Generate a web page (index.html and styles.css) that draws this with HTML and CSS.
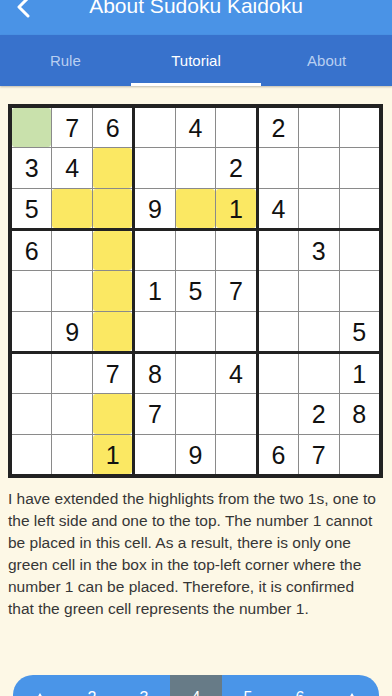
FILE: index.html
```html
<!DOCTYPE html>
<html lang="en">
<head>
<meta charset="utf-8">
<title>About Sudoku Kaidoku</title>
<link rel="stylesheet" href="styles.css">
</head>
<body>
<div class="app">
  <header class="appbar">
    <button class="back" aria-label="Back">
      <svg width="44" height="35" viewBox="0 0 44 35"><polyline points="28,-2 19,7 28,16" fill="none" stroke="#fff" stroke-width="3" stroke-linecap="round" stroke-linejoin="round"/></svg>
    </button>
    <h1 class="title">About Sudoku Kaidoku</h1>
    <span class="spacer"></span>
  </header>
  <nav class="tabs">
    <a class="tab">Rule</a>
    <a class="tab active">Tutorial</a>
    <a class="tab">About</a>
  </nav>
  <main class="content">
    <div class="board">
      <div class="box">
        <div class="cell"><div class="mark g"></div></div>
        <div class="cell">7</div>
        <div class="cell">6</div>
        <div class="cell">3</div>
        <div class="cell">4</div>
        <div class="cell"><div class="mark y"></div></div>
        <div class="cell">5</div>
        <div class="cell"><div class="mark y"></div></div>
        <div class="cell"><div class="mark y"></div></div>
      </div>
      <div class="box">
        <div class="cell"></div>
        <div class="cell">4</div>
        <div class="cell"></div>
        <div class="cell"></div>
        <div class="cell"></div>
        <div class="cell">2</div>
        <div class="cell">9</div>
        <div class="cell"><div class="mark y"></div></div>
        <div class="cell"><div class="mark y">1</div></div>
      </div>
      <div class="box">
        <div class="cell">2</div>
        <div class="cell"></div>
        <div class="cell"></div>
        <div class="cell"></div>
        <div class="cell"></div>
        <div class="cell"></div>
        <div class="cell">4</div>
        <div class="cell"></div>
        <div class="cell"></div>
      </div>
      <div class="box">
        <div class="cell">6</div>
        <div class="cell"></div>
        <div class="cell"><div class="mark y"></div></div>
        <div class="cell"></div>
        <div class="cell"></div>
        <div class="cell"><div class="mark y"></div></div>
        <div class="cell"></div>
        <div class="cell">9</div>
        <div class="cell"><div class="mark y"></div></div>
      </div>
      <div class="box">
        <div class="cell"></div>
        <div class="cell"></div>
        <div class="cell"></div>
        <div class="cell">1</div>
        <div class="cell">5</div>
        <div class="cell">7</div>
        <div class="cell"></div>
        <div class="cell"></div>
        <div class="cell"></div>
      </div>
      <div class="box">
        <div class="cell"></div>
        <div class="cell">3</div>
        <div class="cell"></div>
        <div class="cell"></div>
        <div class="cell"></div>
        <div class="cell"></div>
        <div class="cell"></div>
        <div class="cell"></div>
        <div class="cell">5</div>
      </div>
      <div class="box">
        <div class="cell"></div>
        <div class="cell"></div>
        <div class="cell">7</div>
        <div class="cell"></div>
        <div class="cell"></div>
        <div class="cell"><div class="mark y"></div></div>
        <div class="cell"></div>
        <div class="cell"></div>
        <div class="cell"><div class="mark y">1</div></div>
      </div>
      <div class="box">
        <div class="cell">8</div>
        <div class="cell"></div>
        <div class="cell">4</div>
        <div class="cell">7</div>
        <div class="cell"></div>
        <div class="cell"></div>
        <div class="cell"></div>
        <div class="cell">9</div>
        <div class="cell"></div>
      </div>
      <div class="box">
        <div class="cell"></div>
        <div class="cell"></div>
        <div class="cell">1</div>
        <div class="cell"></div>
        <div class="cell">2</div>
        <div class="cell">8</div>
        <div class="cell">6</div>
        <div class="cell">7</div>
        <div class="cell"></div>
      </div>
    </div>
    <p class="explain">I have extended the highlights from the two 1s, one to the left side and one to the top. The number 1 cannot be placed in this cell. As a result, there is only one green cell in the box in the top-left corner where the number 1 can be placed. Therefore, it is confirmed that the green cell represents the number 1.</p>
  </main>
  <footer class="pager">
    <span class="page arrow"><svg width="12" height="12" viewBox="0 0 12 12"><polygon points="6,2 9,7 3,7" fill="#fff"/></svg></span>
    <span class="page">2</span>
    <span class="page">3</span>
    <span class="page current">4</span>
    <span class="page">5</span>
    <span class="page">6</span>
    <span class="page arrow"><svg width="12" height="12" viewBox="0 0 12 12"><polygon points="6,2 9,7 3,7" fill="#fff"/></svg></span>
  </footer>
</div>
</body>
</html>
```
FILE: styles.css
```css
* { box-sizing: border-box; }
html, body { margin: 0; padding: 0; }
body {
  background: #fdf8e6;
  font-family: "Liberation Sans", Arial, sans-serif;
  overflow: hidden;
  height: 696px;
}
.app {
  height: 725px;
  display: flex;
  flex-direction: column;
}
.appbar {
  height: 35px;
  flex: none;
  background: #4a93e6;
  display: grid;
  grid-template-columns: 44px 1fr 44px;
  align-items: start;
  overflow: hidden;
}
.back {
  border: 0;
  padding: 0;
  background: none;
  height: 35px;
  display: block;
}
.back svg { display: block; overflow: visible; }
.title {
  margin: -6px 0 0;
  font-size: 21px;
  line-height: 24px;
  font-weight: 400;
  color: #fff;
  text-align: center;
  white-space: nowrap;
}
.tabs {
  flex: none;
  height: 51px;
  background: #3872cc;
  display: grid;
  grid-template-columns: repeat(3, 1fr);
  box-shadow: 0 1px 2px rgba(0,0,0,0.25);
  position: relative;
  z-index: 1;
}
.tab {
  display: flex;
  align-items: center;
  justify-content: center;
  font-size: 15px;
  color: #b9cff1;
  padding-top: 2px;
  border-bottom: 3px solid transparent;
}
.tab.active {
  color: #fff;
  font-weight: 500;
  border-bottom-color: #fff;
}
.content {
  flex: 1;
  padding: 18px 9px 0 8px;
}
.board {
  width: 375px;
  height: 374px;
  background: #222;
  padding: 4px;
  display: grid;
  grid-template-columns: repeat(3, 1fr);
  grid-template-rows: repeat(3, 1fr);
  gap: 3px;
}
.box {
  background: #8a8a8a;
  display: grid;
  grid-template-columns: repeat(3, 1fr);
  grid-template-rows: repeat(3, 1fr);
  gap: 1px;
}
.cell {
  background: #fff;
  display: grid;
  place-items: center;
  font-size: 25px;
  line-height: 25px;
  color: #111;
  padding-top: 2px;
}
.cell:has(.mark) { padding: 0; }
.mark {
  width: 100%;
  height: 100%;
  border-radius: 3px;
  display: grid;
  place-items: center;
  padding-top: 2px;
}
.mark.y { background: #fbe863; }
.mark.g { background: #c9e1ac; }
.explain {
  margin: 10px 0 0;
  font-size: 15.5px;
  line-height: 22px;
  color: #363636;
}
.pager {
  flex: none;
  height: 50px;
  margin: 0 13px;
  padding: 0 1px;
  background: #4a95e8;
  border-radius: 20px 20px 0 0;
  display: grid;
  grid-template-columns: repeat(7, 1fr);
  overflow: hidden;
}
.page {
  display: flex;
  justify-content: center;
  align-items: flex-start;
  padding-top: 14px;
  font-size: 16px;
  color: #fff;
}
.page.arrow { padding-top: 16px; }
.page.arrow svg { display: block; }
.page.current { background: #677b87; }
```
